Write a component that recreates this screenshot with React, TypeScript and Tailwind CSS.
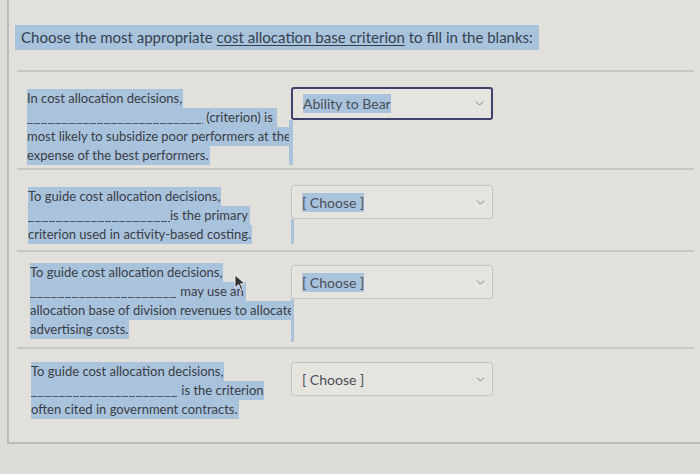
import { ChevronDown } from "lucide-react";

const HL = "bg-[#a9c3dc]";

const Line = ({ children, w }: { children: React.ReactNode; w?: string }) => (
  <div className={`block h-[19px] ${w ?? "w-fit"} ${HL} pr-[1px] whitespace-nowrap`}>{children}</div>
);

// blank to be filled: an underscore rule
const Blank = ({ w }: { w: number }) => (
  <span
    className="inline-block h-[1px] bg-[repeating-linear-gradient(90deg,#50545c_0_6px,transparent_6px_7px)] align-[-2px]"
    style={{ width: w }}
  />
);

const Select = ({ value, focused = false, hl = false, h = "h-[34px]" }: { value: string; focused?: boolean; hl?: boolean; h?: string }) => (
  <div
    className={`flex ${h} w-[202px] items-center justify-between rounded-[3px] bg-[#e5e4df] pl-[10px] pr-[5px] ${
      focused ? "border-2 border-[#3d416c]" : "border border-[#c6c5c0]"
    }`}
  >
    <span className={`text-[14px] leading-[19px] text-[#4a4f57] ${hl ? HL : ""}`}>{value}</span>
    <ChevronDown size={13} strokeWidth={1.6} className="text-[#6d7178]" />
  </div>
);

const Sep = () => <div className="ml-[8px] mr-[6px] h-[2px] bg-[#c9c7c1]" />;

export default function App() {
  return (
    <div
      className="relative h-[474px] w-[700px] overflow-hidden bg-[#dedcd6] text-[#3a3d44]"
      style={{ fontFamily: "Lato, 'Open Sans', sans-serif" }}
    >
      <div className="ml-[7px] h-[444px] border-b-2 border-l-2 border-[#bdbbb5] bg-[#e2e0da] pt-[25px]">
        {/* Title */}
        <div className="ml-[6px] w-fit">
          <div className={`${HL} h-[25px] px-[6px] text-[15px] leading-[25px] text-[#36404c]`}>
            Choose the most appropriate <span className="underline underline-offset-2">cost allocation base criterion</span> to
            fill in the blanks:
          </div>
        </div>
        <div className="mt-[20px]">
          <Sep />
        </div>

        {/* Row 1 */}
        <div className="flex h-[96px] text-[13px] leading-[19px]">
          <div className="ml-[18px] w-[264px] pt-[17px]">
            <Line>In cost allocation decisions,</Line>
            <Line w="w-[250px]">
              <Blank w={176} /> (criterion) is
            </Line>
            <Line w="w-[265px]">most likely to subsidize poor performers at the</Line>
            <Line>expense of the best performers.</Line>
          </div>
          <div className="flex flex-col pt-[15px]">
            <Select value="Ability to Bear" focused hl h="h-[33px]" />
            <div className={`ml-[-2px] h-[45px] w-[4px] ${HL}`} />
          </div>
        </div>
        <Sep />

        {/* Row 2 */}
        <div className="flex h-[80px] text-[13px] leading-[19px]">
          <div className="ml-[19px] w-[263px] pt-[17px]">
            <Line>To guide cost allocation decisions,</Line>
            <Line w="w-[222px]">
              <Blank w={142} />
              is the primary
            </Line>
            <Line>criterion used in activity-based costing.</Line>
          </div>
          <div className="flex flex-col pt-[15px]">
            <Select value="[ Choose ]" hl />
            <div className={`ml-[0px] h-[25px] w-[3px] ${HL}`} />
          </div>
        </div>
        <Sep />

        {/* Row 3 */}
        <div className="relative flex h-[95px] text-[13px] leading-[19px]">
          <div className="ml-[21px] w-[261px] pt-[11px]">
            <Line>To guide cost allocation decisions,</Line>
            <Line w="w-[216px]">
              <Blank w={147} /> may use an
            </Line>
            <Line w="w-[262px]">allocation base of division revenues to allocate</Line>
            <Line>advertising costs.</Line>
          </div>
          <div className="flex flex-col pt-[13px]">
            <Select value="[ Choose ]" hl />
            <div className={`ml-[0px] h-[43px] w-[3px] ${HL}`} />
          </div>
          {/* mouse pointer */}
          <svg className="absolute left-[225px] top-[22px]" width="14" height="18" viewBox="0 0 14 18">
            <path d="M1 1 L1 14 L4.5 10.5 L7 16 L9 15 L6.5 9.8 L11 9.8 Z" fill="#2d2f33" stroke="#e8e8e8" strokeWidth="1" />
          </svg>
        </div>
        <Sep />

        {/* Row 4 */}
        <div className="flex h-[92px] text-[13px] leading-[19px]">
          <div className="ml-[22px] w-[260px] pt-[13px]">
            <Line>To guide cost allocation decisions,</Line>
            <Line w="w-[233px]">
              <Blank w={147} /> is the criterion
            </Line>
            <Line>often cited in government contracts.</Line>
          </div>
          <div className="flex flex-col pt-[13px]">
            <Select value="[ Choose ]" />
          </div>
        </div>
      </div>
    </div>
  );
}
